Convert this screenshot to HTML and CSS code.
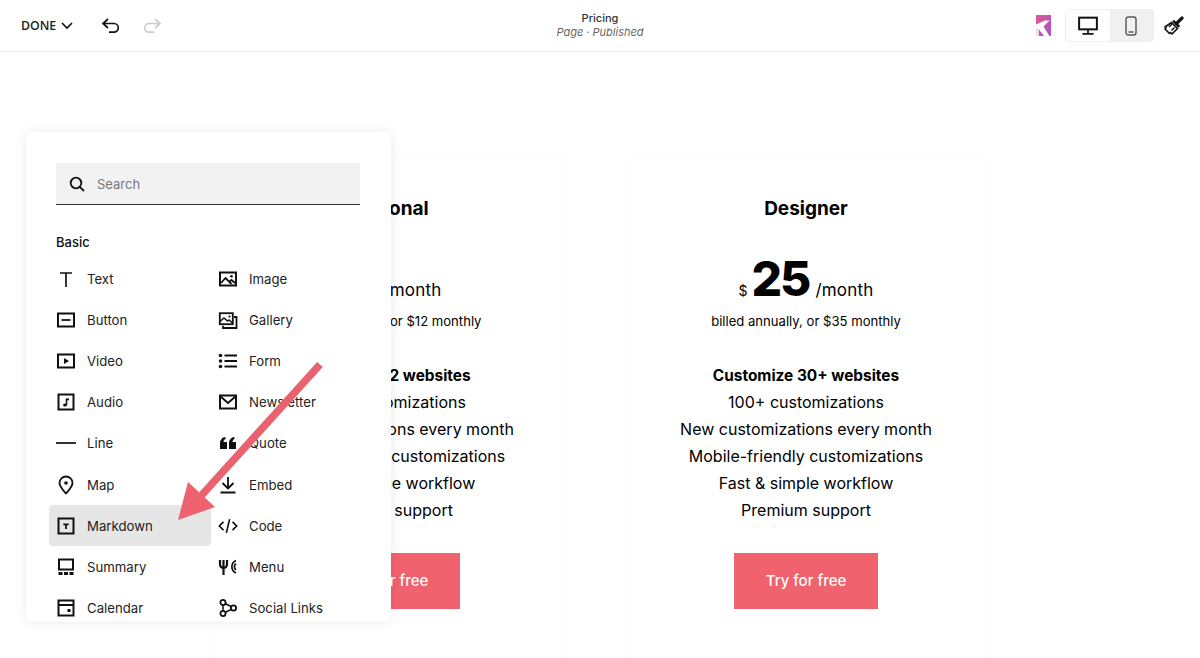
FILE: index.html
```html
<!DOCTYPE html>
<html lang="en">
<head>
<meta charset="utf-8">
<title>Pricing</title>
<link rel="stylesheet" href="styles.css">
</head>
<body>
<div class="app">
  <header class="toolbar">
    <div class="tb-left">
      <button class="done">DONE
        <svg class="ico-chev" viewBox="0 0 12 8"><path d="M1 1l5 5 5-5" fill="none" stroke="#111" stroke-width="1.600"/></svg>
      </button>
      <svg class="ico-hist" viewBox="0 0 20 16"><path d="M7 1L2 5.500 7 10M2 5.500h11a4.300 4.300 0 0 1 0 8.600H8" fill="none" stroke="#111" stroke-width="1.700"/></svg>
      <svg class="ico-hist" viewBox="0 0 20 16"><path d="M13 1l5 4.500L13 10M18 5.500H7a4.300 4.300 0 0 0 0 8.600h5" fill="none" stroke="#ccc" stroke-width="1.700"/></svg>
    </div>
    <div class="tb-title">
      <div class="tb-name">Pricing</div>
      <div class="tb-status">Page · Published</div>
    </div>
    <div class="tb-right">
      <svg class="logo" viewBox="0 0 15 21">
        <defs><linearGradient id="kg" x1="0" y1="0" x2="1" y2="1"><stop offset="0" stop-color="#dd5a9a"/><stop offset="1" stop-color="#a850c4"/></linearGradient></defs>
        <rect width="15" height="21" fill="url(#kg)"/>
        <path d="M0 9.500L9 5.500h4.500L7.500 11.500 13.500 21H8L3 14.500 0 14.500z" fill="#fff"/>
        <path d="M0 14.500h3V21H0z" fill="#f2d9e8"/>
      </svg>
      <div class="view-toggle">
        <div class="view active">
          <svg class="ico-view" viewBox="0 0 18 17"><rect x="1" y="1" width="16" height="10.500" fill="none" stroke="#111" stroke-width="1.800"/><path d="M9 12v3M4 15.500h10" stroke="#111" stroke-width="1.600"/></svg>
        </div>
        <div class="view">
          <svg class="ico-view" viewBox="0 0 12 20"><rect x="1" y="1" width="10" height="18" rx="2.200" fill="none" stroke="#555" stroke-width="1.400"/><path d="M3.500 16h5" stroke="#555" stroke-width="1.400"/></svg>
        </div>
      </div>
      <svg class="ico-brush" viewBox="0 0 20 20">
        <path d="M12.500 7.500L18 2" stroke="#111" stroke-width="3.200" stroke-linecap="round"/>
        <path d="M10 3.800l6.200 6.200-1.800 1.800-6.200-6.200z" fill="#111"/>
        <path d="M7.500 6.500l6 6-5.500 5.500-1.500-1.500-1 1-4.500-4.500 1-1-1-1z" fill="#fff" stroke="#111" stroke-width="1.700" stroke-linejoin="round"/>
        <path d="M5 11l3-3M7.500 14.500l3-3" stroke="#111" stroke-width="1.500"/>
      </svg>
    </div>
  </header>

  <main class="stage">
    <section class="card">
      <h2 class="plan">Personal</h2>
      <div class="price"><span class="cur">$</span><span class="amt">9</span><span class="per">/month</span></div>
      <p class="billed">billed annually, or $12 monthly</p>
      <ul class="features">
        <li><strong>Customize 2 websites</strong></li>
        <li>100+ customizations</li>
        <li>New customizations every month</li>
        <li>Mobile-friendly customizations</li>
        <li>Fast &amp; simple workflow</li>
        <li>Premium support</li>
      </ul>
      <a class="cta">Try for free</a>
    </section>
    <section class="card">
      <h2 class="plan">Designer</h2>
      <div class="price"><span class="cur">$</span><span class="amt">25</span><span class="per">/month</span></div>
      <p class="billed">billed annually, or $35 monthly</p>
      <ul class="features">
        <li><strong>Customize 30+ websites</strong></li>
        <li>100+ customizations</li>
        <li>New customizations every month</li>
        <li>Mobile-friendly customizations</li>
        <li>Fast &amp; simple workflow</li>
        <li>Premium support</li>
      </ul>
      <a class="cta">Try for free</a>
    </section>

    <aside class="picker">
      <div class="search">
        <svg class="ico-search" viewBox="0 0 16 16"><circle cx="7" cy="7" r="5.300" fill="none" stroke="#111" stroke-width="1.800"/><path d="M10.800 10.800L15 15" stroke="#111" stroke-width="1.800"/></svg>
        <span>Search</span>
      </div>
      <h3 class="group">Basic</h3>
      <div class="blocks">
        <div class="block"><svg class="ico" viewBox="0 0 20 20"><path d="M4 4h12M10 4v14" fill="none" stroke="#111" stroke-width="1.700"/></svg>Text</div>
        <div class="block"><svg class="ico" viewBox="0 0 20 20"><rect x="2" y="3.500" width="16" height="13" fill="none" stroke="#111" stroke-width="2"/><path d="M5.500 10h9" stroke="#111" stroke-width="1.800"/></svg>Button</div>
        <div class="block"><svg class="ico" viewBox="0 0 20 20"><rect x="2" y="3.500" width="16" height="13" fill="none" stroke="#111" stroke-width="2"/><path d="M8 7l5 3-5 3z" fill="#111"/></svg>Video</div>
        <div class="block"><svg class="ico" viewBox="0 0 20 20"><rect x="2.500" y="2.500" width="15" height="15" fill="none" stroke="#111" stroke-width="2"/><path d="M10.500 6.500v6.500" stroke="#111" stroke-width="1.500"/><path d="M10.500 6.500h2.500v1.800h-2.500z" fill="#111"/><ellipse cx="9" cy="13" rx="1.900" ry="1.500" fill="#111"/></svg>Audio</div>
        <div class="block"><svg class="ico" viewBox="0 0 20 20"><path d="M0 10h20" stroke="#111" stroke-width="1.700"/></svg>Line</div>
        <div class="block"><svg class="ico" viewBox="0 0 20 20"><path d="M10 18.500C6.500 14.500 3.500 11.500 3.500 8a6.500 6.500 0 0 1 13 0c0 3.500-3 6.500-6.500 10.500z" fill="none" stroke="#111" stroke-width="1.800"/><circle cx="10" cy="8" r="1.800" fill="#111"/></svg>Map</div>
        <div class="block selected"><svg class="ico" viewBox="0 0 20 20"><rect x="2.500" y="2.500" width="15" height="15" fill="none" stroke="#111" stroke-width="2"/><path d="M7.300 7.500h5.400v1.700h-1.800V13H9.100V9.200H7.300z" fill="#111"/></svg>Markdown</div>
        <div class="block"><svg class="ico" viewBox="0 0 20 20"><rect x="3" y="2.500" width="14" height="10" fill="none" stroke="#111" stroke-width="2"/><path d="M2.500 15h4v3h-4zM8 15h4v3H8zM13.500 15h4v3h-4z" fill="#111"/></svg>Summary</div>
        <div class="block"><svg class="ico" viewBox="0 0 20 20"><rect x="2.500" y="2.500" width="15" height="15" fill="none" stroke="#111" stroke-width="2"/><path d="M3 7h14" stroke="#111" stroke-width="2"/><rect x="11.500" y="11" width="3" height="3" fill="#111"/></svg>Calendar</div>
        <div class="block"><svg class="ico" viewBox="0 0 20 20"><rect x="2" y="3.500" width="16" height="13" fill="none" stroke="#111" stroke-width="2"/><path d="M3 14l4.500-5 6 6M11.500 12.500l2-1.500 3.500 3" fill="none" stroke="#111" stroke-width="1.800"/><circle cx="13.500" cy="7.200" r="1.300" fill="#111"/></svg>Image</div>
        <div class="block"><svg class="ico" viewBox="0 0 20 20"><path d="M5 15.800v2.200h13.500V7H16" fill="none" stroke="#111" stroke-width="1.800"/><rect x="1.800" y="3.200" width="13" height="11" fill="#fff" stroke="#111" stroke-width="1.800"/><path d="M2 11.500l4-3.500 3.500 3 1.500-1 3.500 3" fill="none" stroke="#111" stroke-width="1.500"/><circle cx="11.500" cy="6.500" r="1.100" fill="#111"/></svg>Gallery</div>
        <div class="block"><svg class="ico" viewBox="0 0 20 20"><path d="M6.500 4.500H19M6.500 10H19M6.500 15.500H19" stroke="#111" stroke-width="1.800"/><circle cx="2.500" cy="4.500" r="1.800" fill="#111"/><circle cx="2.500" cy="10" r="1.800" fill="#111"/><circle cx="2.500" cy="15.500" r="1.800" fill="#111"/></svg>Form</div>
        <div class="block"><svg class="ico" viewBox="0 0 20 20"><rect x="2" y="3.500" width="16" height="13" fill="none" stroke="#111" stroke-width="2"/><path d="M2.500 4.500L10 11l7.500-6.500" fill="none" stroke="#111" stroke-width="2"/></svg>Newsletter</div>
        <div class="block"><svg class="ico" viewBox="0 0 20 20"><path d="M2 16V10.500C2 7 4 4.500 7 4l.8 1.800C6.200 6.500 5.600 7.700 5.500 9H9v7zM11 16V10.500C11 7 13 4.500 16 4l.8 1.800c-1.600.7-2.200 1.900-2.300 3.200H18v7z" fill="#111"/></svg>Quote</div>
        <div class="block"><svg class="ico" viewBox="0 0 20 20"><path d="M10 2v11.500M4.500 8l5.500 5.500L15.500 8M2.500 17.500h15" fill="none" stroke="#111" stroke-width="1.800"/></svg>Embed</div>
        <div class="block"><svg class="ico" viewBox="0 0 22 20"><path d="M6 5.500L1.500 10 6 14.500M16 5.500l4.500 4.500-4.500 4.500M12.800 2.500L9.200 17.500" fill="none" stroke="#111" stroke-width="1.800"/></svg>Code</div>
        <div class="block"><svg class="ico" viewBox="0 0 20 20"><path d="M2 3v4.500a3.500 3.500 0 0 0 7 0V3M5.500 3v15" fill="none" stroke="#111" stroke-width="2.200"/><path d="M18 3.500a6.800 6.800 0 0 0 0 12.500M18 6.800a3.600 3.600 0 0 0 0 6" fill="none" stroke="#111" stroke-width="1.700"/></svg>Menu</div>
        <div class="block"><svg class="ico" viewBox="0 0 20 20"><path d="M5 4.500l11 5.500L5 15.500z" fill="none" stroke="#111" stroke-width="1.500"/><circle cx="5" cy="4.500" r="2.600" fill="#fff" stroke="#111" stroke-width="1.800"/><circle cx="15.500" cy="10" r="2.600" fill="#fff" stroke="#111" stroke-width="1.800"/><circle cx="5" cy="15.500" r="2.600" fill="#fff" stroke="#111" stroke-width="1.800"/></svg>Social Links</div>
      </div>
    </aside>

    <svg class="arrow" viewBox="0 0 160 170">
      <path d="M143 2.500L23 135" stroke="#e8636f" stroke-width="7.500"/>
      <path d="M1 158L11 120 38 145z" fill="#ee6270"/>
    </svg>
  </main>
</div>
</body>
</html>
```

FILE: styles.css
```css
* { box-sizing: border-box; }
html, body { margin: 0; padding: 0; }
body {
  width: 1200px;
  height: 658px;
  overflow: hidden;
  background: #fff;
  color: #111;
  font-family: "Inter", "Liberation Sans", sans-serif;
}
.app { display: flex; flex-direction: column; height: 658px; }

.toolbar {
  height: 52px;
  flex: none;
  display: grid;
  grid-template-columns: 1fr auto 1fr;
  align-items: center;
  border-bottom: 1px solid #efefef;
  background: #fff;
}
.tb-left { display: flex; align-items: center; padding-left: 21px; }
.done {
  display: flex;
  align-items: center;
  gap: 5px;
  border: 0;
  padding: 0;
  background: none;
  color: #222;
  font: 600 12.3px "Open Sans", sans-serif;
  margin-right: 28px;
}
.ico-chev { width: 12px; height: 8px; }
.ico-hist { width: 20px; height: 16px; margin-right: 21px; }
.tb-title { text-align: center; font-size: 11px; line-height: 14px; padding-bottom: 2px; }
.tb-name { color: #333; font-weight: 500; }
.tb-status { color: #666; font-style: italic; }
.tb-right { display: flex; align-items: center; justify-content: flex-end; padding-right: 16px; }
.logo { width: 15px; height: 21px; margin-right: 14px; }
.view-toggle { display: flex; width: 89px; height: 33px; padding: 1px; border-radius: 4px; background: #f0f0f0; margin-right: 10px; }
.view { flex: 1; display: flex; align-items: center; justify-content: center; border-radius: 3px; }
.view.active { background: #fff; }
.ico-view { height: 20px; width: 20px; }
.ico-brush { width: 20px; height: 20px; }

.stage {
  position: relative;
  flex: 1;
  overflow: hidden;
  display: flex;
  gap: 58px;
  padding: 106px 0 0 208px;
}
.card {
  width: 360px;
  height: 560px;
  flex: none;
  padding-top: 37px;
  text-align: center;
  font-family: "Inter", "Liberation Sans", sans-serif;
  color: #000;
  border: 1px solid #fbfbfb;
  box-shadow: 0 0 4px rgba(0,0,0,.012);
}
.plan { margin: 0; font-size: 19px; line-height: 26px; font-weight: 700; }
.price {
  display: flex;
  align-items: baseline;
  justify-content: center;
  height: 60px;
  margin-top: 27px;
  line-height: 60px;
}
.cur { font-size: 14px; margin-right: 4px; }
.amt { font-size: 48px; font-weight: 800; margin-right: 6px; letter-spacing: -2px; }
.per { font-size: 17px; letter-spacing: .2px; }
.billed { margin: 2px 0 0; font-size: 13.1px; line-height: 20px; }
.features { list-style: none; margin: 31px 0 0; padding: 0; font-size: 16px; line-height: 27px; }
.features strong { font-weight: 700; font-size: 15.4px; }
.cta {
  display: block;
  width: 144px;
  height: 56px;
  margin: 29px auto 0;
  background: #f0626e;
  color: #fff;
  font-size: 15px;
  font-weight: 500;
  line-height: 56px;
  text-align: center;
}

.picker {
  position: absolute;
  left: 26px;
  top: 80px;
  width: 365px;
  height: 490px;
  overflow: hidden;
  padding: 31px 23px 0;
  background: #fff;
  border-radius: 6px;
  box-shadow: 0 0 12px rgba(0,0,0,.09);
}
.search {
  display: flex;
  align-items: center;
  gap: 12px;
  height: 42px;
  margin: 0 8px 0 7px;
  padding-left: 13px;
  background: #f2f2f2;
  border-bottom: 1.5px solid #333;
  color: #777;
  font-size: 13px;
}
.ico-search { width: 16px; height: 16px; }
.group { margin: 29px 7px 0; font-size: 13px; line-height: 16px; font-weight: 500; color: #111; }
.blocks {
  display: grid;
  grid-template-columns: 162px 162px;
  grid-auto-flow: column;
  grid-template-rows: repeat(9, 41.2px);
  margin-top: 8px;
}
.block {
  display: flex;
  align-items: center;
  gap: 11px;
  padding-left: 7px;
  font-size: 13.2px;
  color: #222;
  border-radius: 4px;
}
.block.selected { background: #e6e6e6; }
.ico { width: 20px; height: 20px; flex: none; }

.arrow {
  position: absolute;
  left: 177px;
  top: 310px;
  width: 160px;
  height: 170px;
}
```
